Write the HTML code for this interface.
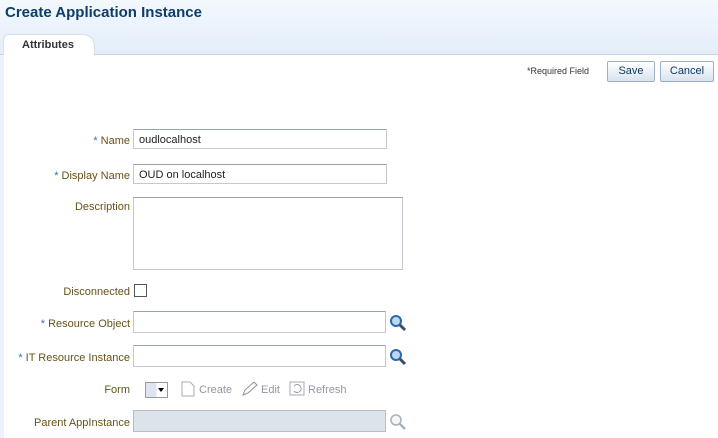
<!DOCTYPE html><html><head><style>
body{margin:0;width:718px;height:438px;overflow:hidden;background:#fff;font-family:"Liberation Sans",sans-serif;font-size:11px;position:relative}
.a{position:absolute}
.hdr{left:0;top:0;width:718px;height:54px;background:linear-gradient(#f3f8fd,#e3eef9);border-bottom:1px solid #c3d3e4}
.t{left:5px;top:4px;font-size:15px;font-weight:bold;color:#0e3d66}
.tab{left:3px;top:34px;width:90px;height:21px;background:#fff;border-radius:6px 12px 0 0;border:1px solid #d5e0ec;border-bottom:none}
.tab span{position:absolute;left:18px;top:4px;font-weight:bold;color:#333}
.strip{left:0;top:55px;width:4px;height:383px;background:#eaf2fb}
.lbl{color:#66521a;text-align:right;right:588px;font-size:11px}
.lbl b{color:#3b6fb0;font-weight:normal}
.in{left:133px;width:251px;height:20px;border:1px solid #c4c9cf;border-top-color:#9aa3ad;background:#fff;color:#222;line-height:20px;padding-left:5px;box-sizing:border-box}
.btn{top:61px;height:19px;border:1px solid #9db0c4;border-radius:2px;background:linear-gradient(#fff,#d8e3ee);color:#0f3a64;text-align:center;line-height:18px}
.g{color:#8e98a4}
</style></head><body>
<div class="a hdr"></div>
<div class="a t">Create Application Instance</div>
<div class="a tab"><span>Attributes</span></div>
<div class="a strip"></div>
<div class="a" style="left:527px;top:66px;font-size:9px;color:#333">*Required Field</div>
<div class="a btn" style="left:607px;width:46px">Save</div>
<div class="a btn" style="left:660px;width:52px">Cancel</div>

<div class="a lbl" style="top:135px"><b>*</b> Name</div>
<div class="a in" style="top:129px;width:254px">oudlocalhost</div>
<div class="a lbl" style="top:170px"><b>*</b> Display Name</div>
<div class="a in" style="top:164px;width:254px">OUD on localhost</div>
<div class="a lbl" style="top:201px">Description</div>
<div class="a in" style="top:197px;width:270px;height:73px"></div>
<div class="a lbl" style="top:286px">Disconnected</div>
<div class="a" style="left:134px;top:284px;width:11px;height:11px;border:1px solid #555"></div>
<div class="a lbl" style="top:318px"><b>*</b> Resource Object</div>
<div class="a in" style="top:311px;width:253px;height:22px"></div>
<div class="a lbl" style="top:352px"><b>*</b> IT Resource Instance</div>
<div class="a in" style="top:345px;width:253px;height:22px"></div>
<svg class="a" style="left:389px;top:314px" width="18" height="18"><circle cx="7" cy="7" r="5" fill="#bcd8f2" stroke="#2c68a8" stroke-width="2"/><line x1="11" y1="11" x2="16" y2="16" stroke="#3a4e66" stroke-width="3"/></svg>
<svg class="a" style="left:389px;top:348px" width="18" height="18"><circle cx="7" cy="7" r="5" fill="#bcd8f2" stroke="#2c68a8" stroke-width="2"/><line x1="11" y1="11" x2="16" y2="16" stroke="#3a4e66" stroke-width="3"/></svg>
<div class="a lbl" style="top:384px">Form</div>
<div class="a" style="left:145px;top:382px;width:21px;height:14px;border:1px solid #999;background:linear-gradient(90deg,#dde6f0 50%,#fff 50%)"><div class="a" style="left:12px;top:5px;border:3px solid transparent;border-top:4px solid #000"></div></div>
<svg class="a" style="left:180px;top:380px" width="16" height="17"><path d="M2 2h8l4 4v10H2z" fill="#fff" stroke="#aab"/></svg>
<div class="a g" style="left:199px;top:384px">Create</div>
<svg class="a" style="left:241px;top:380px" width="17" height="17"><path d="M2 15l2-5 9-8 3 3-9 8z" fill="#fff" stroke="#8a8f98"/></svg>
<div class="a g" style="left:261px;top:384px">Edit</div>
<svg class="a" style="left:288px;top:380px" width="18" height="17"><rect x="2" y="2" width="14" height="13" fill="#fff" stroke="#aab"/><path d="M6 6a4 4 0 1 1 0 5" fill="none" stroke="#99a"/></svg>
<div class="a g" style="left:308px;top:384px">Refresh</div>
<div class="a lbl" style="top:417px">Parent AppInstance</div>
<div class="a in" style="top:410px;width:253px;height:22px;background:#dde3ea;border-color:#b8bec6"></div>
<svg class="a" style="left:389px;top:413px" width="18" height="18"><circle cx="7" cy="7" r="5" fill="#f4f6f8" stroke="#aab2bc" stroke-width="1.5"/><line x1="11" y1="11" x2="16" y2="16" stroke="#aab2bc" stroke-width="2.5"/></svg>
</body></html>
